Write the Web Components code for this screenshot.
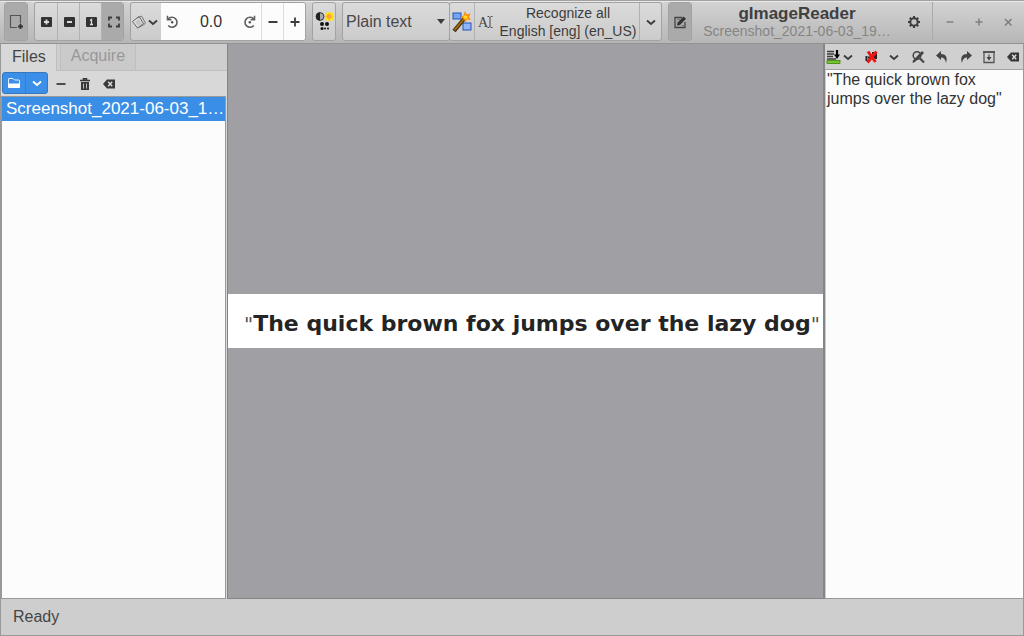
<!DOCTYPE html>
<html lang="en">
<head>
<meta charset="utf-8">
<title>gImageReader</title>
<style>
  html, body {
    margin: 0;
    height: 100%;
  }

  body {
    font-family: "Liberation Sans", Arial, sans-serif;
    font-size: 16px;
    color: #454545;
    background: #cecece;
  }
</style>
</head>
<body>
<app-window></app-window>

<script>
const ICONS = {
  'new': '<path d="M9 13.500H2.500v-12h10v8" fill="none" stroke="#555" stroke-width="1.200"/><path d="M12.500 10v5M10 12.500h5" stroke="#333" stroke-width="1.800"/>',
  'zoom-in': '<rect x="3" y="3" width="11" height="10" rx="1" fill="#333"/><path d="M8.500 5.500v5M6 8h5" stroke="#ddd" stroke-width="1.800"/>',
  'zoom-out': '<rect x="3" y="3" width="11" height="10" rx="1" fill="#333"/><path d="M6 8h5" stroke="#ddd" stroke-width="1.800"/>',
  'zoom-one': '<rect x="3" y="3" width="11" height="10" rx="1" fill="#333"/><path d="M7 6.500L8.500 5.500V10.500M7 10.500h3" fill="none" stroke="#ddd" stroke-width="1.300"/>',
  'zoom-fit': '<path d="M4 6.500V3.500H7M11 3.500H14V6.500M14 9.500V12.500H11M7 12.500H4V9.500" fill="none" stroke="#3c3c3c" stroke-width="1.800"/>',
  'page': '<path d="M1.500 7.500L8 2.500L12.500 9.500L6.500 14Z" fill="#ddd" stroke="#666"/><path d="M5 4.500L10.500 2L14.500 9L12.500 11L6.500 14" fill="none" stroke="#777"/><path d="M4 7.500L8 5L11 9.500L7 12Z" fill="#c4c4c4"/>',
  'down': '<path d="M4 6.500L8 10L12 6.500" fill="none" stroke="currentColor" stroke-width="1.800"/>',
  'turn-left': '<path d="M4.200 5A5 5 0 1 1 4.200 11.500" fill="none" stroke="#606060" stroke-width="1.600"/><path d="M3.500 1.800V5.800H7.500" fill="none" stroke="#606060" stroke-width="1.600"/><circle cx="8.200" cy="8.300" r="1.200" fill="#505050"/>',
  'turn-right': '<path d="M11.800 5A5 5 0 1 0 11.800 11.500" fill="none" stroke="#606060" stroke-width="1.600"/><path d="M12.500 1.800V5.800H8.500" fill="none" stroke="#606060" stroke-width="1.600"/><circle cx="7.800" cy="8.300" r="1.200" fill="#505050"/>',
  'minus': '<path d="M3.500 8h9" stroke="currentColor" stroke-width="1.800"/>',
  'plus': '<path d="M3.500 8h9M8 3.500v9" stroke="currentColor" stroke-width="1.800"/>',
  'contrast': '<path d="M10 .5h8v8h-8z" fill="#ffe21a"/><path d="M14 0l1.300 2.500L18.500 4.500 15.300 6.500 14 9.500 12.700 6.500 9.500 4.500 12.700 2.500z" fill="#ffd000"/><circle cx="14" cy="4.500" r="2.300" fill="#ffa040"/><circle cx="5" cy="4.500" r="3.900" fill="#aaa" stroke="#333"/><path d="M5 .6a3.900 3.900 0 0 0 0 7.800z" fill="#222"/><circle cx="7" cy="12" r="2" fill="#111"/><circle cx="12" cy="12" r="2" fill="#111"/><circle cx="7" cy="16.500" r="1.500" fill="#111"/><circle cx="10" cy="16.500" r="1" fill="#111"/><circle cx="13" cy="16.500" r="1" fill="#111"/>',
  'wand': '<rect x="1" y="2" width="8" height="6" fill="#76a5f4" stroke="#2452b5"/><rect x="11" y="12" width="8" height="7" fill="#8eb5fa" stroke="#2452b5"/><path d="M2 20L12 8" stroke="#4b3208" stroke-width="4"/><path d="M2.500 19L12 8" stroke="#a77418" stroke-width="1.600"/><path d="M13 0l1.500 3.500 4-1-1.500 3.500 2 3-4-.5-2 3-1-4-4-.5 3.500-2.500z" fill="#ff8a00"/><path d="M13.300 3l.8 2 2-.3-1 1.600.8 1.500-2-.3-1 1.200-.5-2-1.600-.7 1.600-1z" fill="#ffdd25"/>',
  'text-cursor': '<text x="0" y="13" font-family="Liberation Serif, serif" font-size="14" fill="#444">A</text><path d="M9.500 2.500h1.500l1 1 1-1h1.500M12 3.500v9M9.500 13.500h1.500l1-1 1 1h1.500" fill="none" stroke="#444"/>',
  'edit': '<path d="M10 3.500H3v10h10V8" fill="none" stroke="#444" stroke-width="1.300"/><path d="M5 11.500l.6-3L11.500 2.600l2.500 2.200L8 10.900z" fill="#333"/><path d="M5 5.500h3M10 11.500h2" stroke="#777"/>',
  'gear': '<circle cx="8" cy="8" r="3.700" fill="none" stroke="#3d3d3d" stroke-width="2"/><path d="M8 2v2M8 12v2M2 8h2M12 8h2M3.800 3.800l1.400 1.400M10.800 10.800l1.400 1.400M3.800 12.200l1.400-1.400M10.800 5.200l1.400-1.400" stroke="#3d3d3d" stroke-width="2"/>',
  'win-min': '<path d="M4.500 8h7" stroke="#808080" stroke-width="1.500"/>',
  'win-max': '<path d="M4.500 8h7M8 4.500v7" stroke="#808080" stroke-width="1.500"/>',
  'win-close': '<path d="M5 5l6.500 6.500M11.500 5L5 11.500" stroke="#808080" stroke-width="1.700"/>',
  'folder': '<path d="M2.500 12.500V4Q2.500 3.500 3 3.500H7L8.500 5H13Q13.500 5 13.500 6V12.500Z" fill="none" stroke="#e2f0ff"/><path d="M2 8.500h12l-.5 4.500h-11z" fill="#fff"/>',
  'trash': '<path d="M3 4.500h10M6.500 4V2.700h3V4" fill="none" stroke="#383838" stroke-width="1.500"/><path d="M4 6h8v8H4z" fill="#383838"/><path d="M6.500 7.500v5M9.500 7.500v5" stroke="#bbb"/>',
  'clear': '<path d="M2 8l4-4.500h8v9H6z" fill="#383838"/><path d="M7.200 5.800l4 4.400M11.200 5.800l-4 4.400" stroke="#ddd" stroke-width="1.400"/>',
  'insert': '<path d="M1 2.500h7M1 5h7M1 7.500h6M1 10h9" stroke="#3e3e3e" stroke-width="1.500"/><path d="M11 1v5" stroke="#000" stroke-width="2.200"/><path d="M8 5.500h6L11 10z" fill="#000"/><rect x="1" y="11.500" width="13" height="3" fill="#74c826" stroke="#397500" stroke-width=".7"/>',
  'strip': '<path d="M3.500 7v5M5 8.500h6V5M9 4h4v6" fill="none" stroke="#222" stroke-width="2"/><path d="M5 2.500l7.500 10.500M13.500 2.500L4.500 13.500" stroke="#f01414" stroke-width="3"/>',
  'find': '<circle cx="7" cy="6.500" r="3.800" fill="none" stroke="#444" stroke-width="1.500"/><path d="M10 9.500l4 4" stroke="#444" stroke-width="2.200"/><path d="M2.500 14l.5-2.500L12 2l2 2L5 13z" fill="#444"/>',
  'undo': '<path d="M2 6.500L7 2V5C11.500 5 14 8 12 14 11.500 10.500 10 8.500 7 8.500V11z" fill="#444"/>',
  'redo': '<path d="M14 6.500L9 2V5C4.500 5 2 8 4 14 4.500 10.500 6 8.500 9 8.500V11z" fill="#444"/>',
  'save': '<path d="M2 3h12" stroke="#555" stroke-width="2"/><path d="M3 4v9.500h10V4M8 5.500v5" fill="none" stroke="#555" stroke-width="1.300"/><path d="M5.500 8h5L8 11.500z" fill="#444"/>',
};

class AppIcon extends HTMLElement {
  constructor() {
    super();
    this.attachShadow({ mode: 'open' });
  }

  connectedCallback() {
    // the colour icons are drawn on a larger grid
    const size = this.getAttribute('size') || 16;
    this.shadowRoot.innerHTML = `
      <style>
        :host { display: inline-flex; flex: none; }
        svg { display: block; }
      </style>
      <svg width="${size}" height="${size}" viewBox="0 0 ${size} ${size}" aria-hidden="true">${ICONS[this.getAttribute('name')]}</svg>
    `;
  }
}

class ToolButton extends HTMLElement {
  constructor() {
    super();
    this.attachShadow({ mode: 'open' });
  }

  connectedCallback() {
    const icon = this.getAttribute('icon');
    const size = this.getAttribute('size') || 16;
    this.shadowRoot.innerHTML = `
      <style>
        :host { display: flex; box-sizing: border-box; color: #3c3c3c; }
        button {
          flex: 1;
          display: flex;
          align-items: center;
          justify-content: center;
          min-width: 0;
          padding: 0;
          border: 0;
          background: none;
          color: inherit;
          font: inherit;
        }
        :host([active]) button { background: #aaa; }
      </style>
      <button type="button" aria-label="${this.getAttribute('label')}">
        ${icon ? `<app-icon name="${icon}" size="${size}"></app-icon>` : ''}<slot></slot>
      </button>
    `;
    if (this.hasAttribute('active')) {
      this.shadowRoot.querySelector('button').setAttribute('aria-pressed', 'true');
    }
  }
}

class ButtonGroup extends HTMLElement {
  constructor() {
    super();
    this.attachShadow({ mode: 'open' });
    this.shadowRoot.innerHTML = `
      <style>
        :host {
          display: flex;
          flex: none;
          box-sizing: border-box;
          border: 1px solid #a2a2a2;
          border-radius: 3px;
          overflow: hidden;
          background: linear-gradient(#dbdbdb, #cbcbcb);
        }
        ::slotted(*) { min-width: 22px; }
        ::slotted(*:not(:first-child)) { border-left: 1px solid #b2b2b2; }
        ::slotted(.joined) { border-left: 0 !important; }
      </style>
      <slot></slot>
    `;
  }
}

class AngleSpin extends HTMLElement {
  constructor() {
    super();
    this.attachShadow({ mode: 'open' });
    this.shadowRoot.innerHTML = `
      <style>
        :host { display: flex; background: #fcfcfc; }
        tool-button { width: 22px; }
        input {
          width: 56px;
          box-sizing: border-box;
          padding: 0;
          border: 0;
          background: none;
          color: #333;
          font: inherit;
          text-align: center;
        }
        .step { border-left: 1px solid #ddd; }
      </style>
      <tool-button icon="turn-left" label="Rotate left"></tool-button>
      <input type="text" value="0.0" aria-label="Angle">
      <tool-button icon="turn-right" label="Rotate right"></tool-button>
      <tool-button class="step" icon="minus" label="Decrease angle"></tool-button>
      <tool-button class="step" icon="plus" label="Increase angle"></tool-button>
    `;
  }
}

class FormatSelect extends HTMLElement {
  constructor() {
    super();
    this.attachShadow({ mode: 'open' });
    this.shadowRoot.innerHTML = `
      <style>
        :host { display: grid; width: 106px; }
        select {
          grid-area: 1 / 1;
          appearance: none;
          box-sizing: border-box;
          padding: 0 16px 0 3px;
          border: 0;
          background: none;
          color: #484848;
          font: inherit;
        }
        span {
          grid-area: 1 / 1;
          place-self: center end;
          margin-right: 4px;
          border: 4px solid transparent;
          border-top: 5px solid #3c3c3c;
          border-bottom: 0;
          pointer-events: none;
        }
      </style>
      <select aria-label="Output format">
        <option>Plain text</option>
      </select>
      <span></span>
    `;
  }
}

class HeaderBar extends HTMLElement {
  constructor() {
    super();
    this.attachShadow({ mode: 'open' });
    this.shadowRoot.innerHTML = `
      <style>
        :host {
          display: flex;
          gap: 6px;
          box-sizing: border-box;
          height: 44px;
          padding: 1px 2px 2px 4px;
          border-top: 1px solid #a2a2a2;
          border-bottom: 1px solid #929292;
          background: linear-gradient(#d4d4d4, #b6b6b6);
          box-shadow: inset 0 1px #e8e8e8;
        }
        .format { margin-right: -7px; }
        .recognize { width: 165px; }
        .lines {
          padding-left: 6px;
          font-size: 14px;
          line-height: 18px;
          white-space: nowrap;
          text-align: center;
        }
        .title {
          flex: 1;
          min-width: 0;
          text-align: center;
          padding-top: 3px;
        }
        h1 { margin: 0; font-size: 17px; line-height: 18px; color: #404040; }
        .title span { display: block; font-size: 14px; line-height: 17px; color: #858585; white-space: nowrap; }
        .menu { width: 24px; }
        .controls {
          display: flex;
          border-left: 1px solid #aaa;
          padding-left: 2px;
        }
        .controls tool-button { width: 29px; }
      </style>
      <button-group><tool-button icon="new" label="Show sources" active></tool-button></button-group>
      <button-group>
        <tool-button icon="zoom-in" label="Zoom in"></tool-button>
        <tool-button icon="zoom-out" label="Zoom out"></tool-button>
        <tool-button icon="zoom-one" label="Original size"></tool-button>
        <tool-button icon="zoom-fit" label="Best fit" active></tool-button>
      </button-group>
      <button-group>
        <tool-button icon="page" label="Rotate mode"><app-icon name="down" style="margin-left:-2px"></app-icon></tool-button>
        <angle-spin class="joined"></angle-spin>
      </button-group>
      <button-group><tool-button icon="contrast" size="19" label="Image controls"></tool-button></button-group>
      <button-group class="format"><format-select></format-select></button-group>
      <button-group>
        <tool-button icon="wand" size="21" label="Detect layout" style="width:24px"></tool-button>
        <tool-button class="recognize" icon="text-cursor" label="Recognize all English [eng] (en_US)">
          <div class="lines">Recognize all<br>English [eng] (en_US)</div>
        </tool-button>
        <tool-button icon="down" label="Languages"></tool-button>
      </button-group>
      <button-group><tool-button icon="edit" label="Show output" active></tool-button></button-group>
      <div class="title">
        <h1>gImageReader</h1>
        <span>Screenshot_2021-06-03_19…</span>
      </div>
      <tool-button class="menu" icon="gear" label="Menu"></tool-button>
      <div class="controls">
        <tool-button icon="win-min" label="Minimize"></tool-button>
        <tool-button icon="win-max" label="Maximize"></tool-button>
        <tool-button icon="win-close" label="Close"></tool-button>
      </div>
    `;
  }
}

class SourcePanel extends HTMLElement {
  constructor() {
    super();
    this.attachShadow({ mode: 'open' });
    this.shadowRoot.innerHTML = `
      <style>
        :host {
          display: flex;
          flex-direction: column;
          box-sizing: border-box;
          border-left: 1px solid #999;
          background: #d8d8d8;
        }
        .tabs {
          display: flex;
          gap: 3px;
          box-sizing: border-box;
          height: 27px;
          border-bottom: 1px solid #bfbfbf;
          background: #cecece;
        }
        .tabs button {
          padding: 0 10px 2px;
          border: solid #bfbfbf;
          border-width: 0 1px;
          background: #cacaca;
          color: #989898;
          font: inherit;
        }
        .tabs button[aria-selected="true"] {
          margin-bottom: -1px;
          border-left-color: #d8d8d8;
          background: #d8d8d8;
          color: #454545;
        }
        .tools { display: flex; height: 25px; padding-left: 1px; }
        .tools > tool-button { width: 24px; }
        .open {
          margin: 1px 1px 2px 0;
          border-color: #3678be;
          background: #3c8fe8;
        }
        .open tool-button { color: #fff; border-color: #3480d4; }
        ul {
          flex: 1;
          margin: 0 1px 0 0;
          padding: 0;
          border: 1px solid #999;
          background: #fcfcfc;
          list-style: none;
        }
        li {
          padding: 0 4px;
          background: #3a8ee6;
          color: #fff;
          font-size: 17px;
          line-height: 24px;
          white-space: nowrap;
        }
      </style>
      <div class="tabs" role="tablist">
        <button type="button" role="tab" aria-selected="true">Files</button>
        <button type="button" role="tab" aria-selected="false">Acquire</button>
      </div>
      <div class="tools">
        <button-group class="open">
          <tool-button icon="folder" label="Add images"></tool-button>
          <tool-button icon="down" label="More sources"></tool-button>
        </button-group>
        <tool-button icon="minus" label="Remove image"></tool-button>
        <tool-button icon="trash" label="Delete image"></tool-button>
        <tool-button icon="clear" label="Clear list"></tool-button>
      </div>
      <ul><li>Screenshot_2021-06-03_1…</li></ul>
    `;
  }
}

class ImageView extends HTMLElement {
  constructor() {
    super();
    this.attachShadow({ mode: 'open' });
    this.shadowRoot.innerHTML = `
      <style>
        :host {
          display: flex;
          align-items: center;
          min-width: 0;
          box-sizing: border-box;
          border: solid #858585;
          border-width: 0 2px 1px 1px;
          background: #a09fa4;
        }
        .scan {
          flex: 1;
          box-sizing: border-box;
          height: 54px;
          padding: 4px 0 0 16px;
          background: #fff;
          color: #242424;
          font: bold 22px/52px "DejaVu Sans", sans-serif;
          white-space: nowrap;
          overflow: hidden;
        }
        .scan span { font-size: 20px; font-weight: normal; color: #555; }
      </style>
      <div class="scan"><span>"</span>The quick brown fox jumps over the lazy dog<span>"</span></div>
    `;
  }
}

class OutputPane extends HTMLElement {
  constructor() {
    super();
    this.attachShadow({ mode: 'open' });
    this.shadowRoot.innerHTML = `
      <style>
        :host {
          display: flex;
          flex-direction: column;
          box-sizing: border-box;
          border: solid #999;
          border-width: 0 1px 1px 0;
          background: #d0d0d0;
        }
        .tools {
          display: flex;
          justify-content: space-between;
          height: 25px;
          border-bottom: 1px solid #a2a2a2;
        }
        .tools tool-button { width: 20px; }
        .tools .wide { width: 32px; }
        textarea {
          flex: 1;
          box-sizing: border-box;
          padding: 0 1px;
          border: 0;
          border-left: 1px solid #ccc;
          outline: 0;
          resize: none;
          background: #fcfcfc;
          color: #333;
          font: inherit;
          line-height: 19px;
        }
      </style>
      <div class="tools">
        <tool-button class="wide" icon="insert" label="Insert mode"><app-icon name="down" style="margin-left:-2px"></app-icon></tool-button>
        <tool-button icon="strip" label="Strip line breaks"></tool-button>
        <tool-button icon="down" label="Strip options"></tool-button>
        <tool-button icon="find" label="Find and replace"></tool-button>
        <tool-button icon="undo" label="Undo"></tool-button>
        <tool-button icon="redo" label="Redo"></tool-button>
        <tool-button icon="save" label="Save output"></tool-button>
        <tool-button icon="clear" label="Clear output"></tool-button>
      </div>
      <textarea aria-label="Output" spellcheck="false">"The quick brown fox jumps over the lazy dog"</textarea>
    `;
  }
}

class AppWindow extends HTMLElement {
  constructor() {
    super();
    this.attachShadow({ mode: 'open' });
    this.shadowRoot.innerHTML = `
      <style>
        :host {
          display: flex;
          flex-direction: column;
          min-height: 100vh;
        }
        main {
          flex: 1;
          display: grid;
          grid-template-columns: 227px minmax(0, 1fr) 199px;
        }
        footer {
          box-sizing: border-box;
          padding: 0 12px;
          border: solid #999;
          border-width: 0 1px 1px;
          background: #cecece;
          line-height: 36px;
        }
      </style>
      <header-bar></header-bar>
      <main>
        <source-panel></source-panel>
        <image-view></image-view>
        <output-pane></output-pane>
      </main>
      <footer>Ready</footer>
    `;
  }
}

window.customElements.define('app-icon', AppIcon);
window.customElements.define('tool-button', ToolButton);
window.customElements.define('button-group', ButtonGroup);
window.customElements.define('angle-spin', AngleSpin);
window.customElements.define('format-select', FormatSelect);
window.customElements.define('header-bar', HeaderBar);
window.customElements.define('source-panel', SourcePanel);
window.customElements.define('image-view', ImageView);
window.customElements.define('output-pane', OutputPane);
window.customElements.define('app-window', AppWindow);
</script>
</body>
</html>
